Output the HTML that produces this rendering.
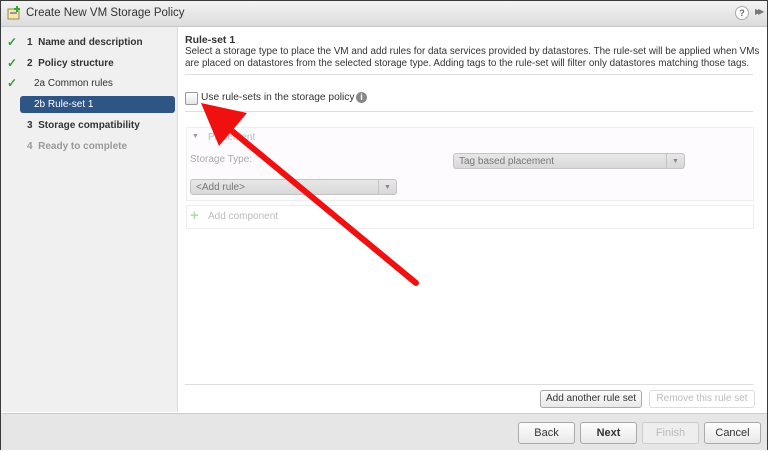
<!DOCTYPE html><html><head><style>
body{margin:0;width:768px;height:450px;overflow:hidden;font-family:"Liberation Sans",sans-serif;font-size:11px;color:#333;}
.win{position:absolute;left:0;top:0;width:766px;height:448px;border:1px solid #3a3a3a;background:#fff;}
.title{position:absolute;left:0;top:0;width:766px;height:25px;background:linear-gradient(#f3f3f3,#dcdcdc);border-bottom:1px solid #c8c8c8;}
.title span{position:absolute;left:25px;top:6px;font-size:11.5px;color:#333}
.nav{position:absolute;left:0;top:26px;width:176px;height:385px;background:#f0f0f0;border-right:1px solid #ddd}
.nav div{position:absolute;font-size:10px;font-weight:bold;color:#333;white-space:nowrap}
.nav div.ck{color:#3a9a3a;font-size:12px}
.main{position:absolute;left:184px;top:26px;width:570px}
.foot{position:absolute;left:0;top:412px;width:766px;height:36px;background:#e6e6e6;border-top:1px solid #ccc}
.btn{position:absolute;height:20px;border:1px solid #aaa;border-radius:3px;background:linear-gradient(#fdfdfd,#e8e8e8);text-align:center;line-height:20px;font-size:11px;color:#333}
.sel{position:absolute;height:16px;border:1px solid #c4c4c4;border-radius:3px;background:linear-gradient(#e8e8e8,#d8d8d8);color:#777;font-size:10px;line-height:16px;padding-left:5px;box-sizing:border-box}
.sel i{position:absolute;right:0;top:0;width:17px;height:14px;border-left:1px solid #c4c4c4;font-style:normal;text-align:center;font-size:7px;color:#888}
</style></head><body><div class="win">
<div class="title"><svg style="position:absolute;left:6px;top:5px" width="14" height="14"><rect x="1" y="3" width="11" height="10" fill="#f4e7b0" stroke="#998844"/><rect x="3" y="6" width="7" height="2" fill="#999"/><path d="M10 0v6M7 3h6" stroke="#3a3" stroke-width="2"/></svg><span>Create New VM Storage Policy</span>
<div style="position:absolute;left:734px;top:5px;width:12px;height:12px;border-radius:50%;background:#fff;border:1px solid #aaa;font-size:9px;text-align:center;line-height:12px;color:#666;font-weight:bold">?</div>
<div style="position:absolute;left:754px;top:6px;font-size:8px;color:#777;letter-spacing:-3px">▶▶</div></div>
<div class="nav">
<div style="left:6px;top:8px" class="ck">✓</div><div style="left:26px;top:10px">1&nbsp; Name and description</div>
<div style="left:6px;top:29px" class="ck">✓</div><div style="left:26px;top:31px">2&nbsp; Policy structure</div>
<div style="left:6px;top:49px" class="ck">✓</div><div style="left:33px;top:51px;font-weight:normal">2a Common rules</div>
<div style="left:19px;top:69px;width:155px;height:17px;background:#2e5584;border-radius:3px"></div><div style="left:33px;top:72px;color:#fff;font-weight:normal">2b Rule-set 1</div>
<div style="left:26px;top:93px">3&nbsp; Storage compatibility</div>
<div style="left:26px;top:114px;color:#999">4&nbsp; Ready to complete</div>
</div>
<div class="main">
<div style="position:absolute;top:7px;font-weight:bold;font-size:10.5px">Rule-set 1</div>
<div style="position:absolute;top:19px;line-height:12px;font-size:9.85px;white-space:nowrap">Select a storage type to place the VM and add rules for data services provided by datastores. The rule-set will be applied when VMs<br>are placed on datastores from the selected storage type. Adding tags to the rule-set will filter only datastores matching those tags.</div>
<div style="position:absolute;top:47px;width:568px;border-top:1px solid #ddd"></div>
<div style="position:absolute;top:65px;left:0;width:11px;height:11px;border:1px solid #999;border-radius:2px;background:linear-gradient(#fff,#e6e6e6)"></div>
<div style="position:absolute;top:65px;left:16px;font-size:10.2px;white-space:nowrap">Use rule-sets in the storage policy</div>
<div style="position:absolute;top:65px;left:171px;width:11px;height:11px;border-radius:50%;background:#888;color:#fff;font-size:9px;text-align:center;line-height:11px;font-weight:bold">i</div>
<div style="position:absolute;top:84px;width:568px;border-top:1px solid #ddd"></div>
<div style="position:absolute;top:100px;left:1px;width:566px;height:72px;border:1px solid #eee;background:#fdfbfd"></div>
<div style="position:absolute;top:106px;left:7px;font-size:7px;color:#999">▼</div>
<div style="position:absolute;top:105px;left:23px;color:#bbb;font-size:10px">Placement</div>
<div style="position:absolute;top:127px;left:5px;color:#aaa;font-size:10px">Storage Type:</div>
<div class="sel" style="top:126px;left:268px;width:232px">Tag based placement<i>▼</i></div>
<div class="sel" style="top:152px;left:5px;width:207px">&lt;Add rule&gt;<i>▼</i></div>
<div style="position:absolute;top:178px;left:1px;width:566px;height:22px;border:1px solid #eee"></div>
<div style="position:absolute;top:182px;left:5px;color:#b6dcb6;font-size:15px;font-weight:bold;line-height:14px">+</div>
<div style="position:absolute;top:184px;left:23px;color:#bbb;font-size:10px">Add component</div>
<div style="position:absolute;top:357px;width:568px;border-top:1px solid #ddd"></div>
</div>
<div class="btn" style="left:539px;top:389px;width:100px;height:16px;line-height:16px;font-size:10px">Add another rule set</div>
<div class="btn" style="left:648px;top:389px;width:104px;height:16px;line-height:16px;font-size:10px;color:#bbb;border-color:#ddd;background:#fff">Remove this rule set</div>
<div class="foot">
<div class="btn" style="left:517px;top:8px;width:55px">Back</div>
<div class="btn" style="left:579px;top:8px;width:55px;font-weight:bold">Next</div>
<div class="btn" style="left:641px;top:8px;width:55px;color:#bbb;border-color:#ccc;background:#eee">Finish</div>
<div class="btn" style="left:703px;top:8px;width:55px">Cancel</div>
</div>
<svg style="position:absolute;left:0;top:0" width="768" height="450"><line x1="415" y1="282" x2="225" y2="125" stroke="#f01010" stroke-width="6" stroke-linecap="round"/><polygon points="200,102 246,112 218,145" fill="#f01010"/></svg>
</div></body></html>
